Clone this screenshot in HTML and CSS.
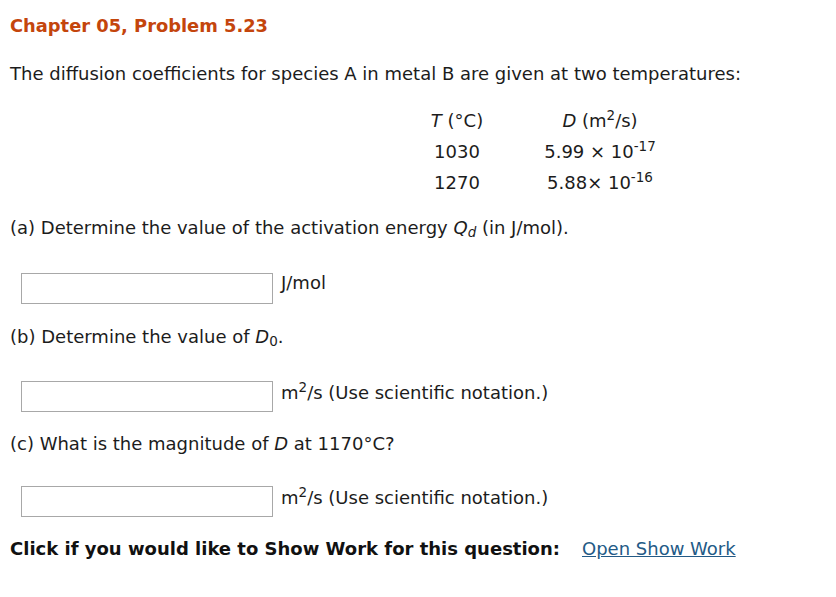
FILE: index.html
```html
<!DOCTYPE html>
<html>
<head>
<meta charset="utf-8">
<link rel="stylesheet" href="styles.css">
</head>
<body>
<div class="page">
  <h1 class="title">Chapter 05, Problem 5.23</h1>
  <p class="intro">The diffusion coefficients for species A in metal B are given at two temperatures:</p>
  <table class="data">
    <tr><td class="c1"><i>T</i> (°C)</td><td class="c2"><i>D</i> (m<sup>2</sup>/s)</td></tr>
    <tr><td class="c1">1030</td><td class="c2">5.99 × 10<sup>-17</sup></td></tr>
    <tr><td class="c1">1270</td><td class="c2">5.88× 10<sup>-16</sup></td></tr>
  </table>
  <p class="q qa">(a) Determine the value of the activation energy <i>Q<sub>d</sub></i> (in J/mol).</p>
  <div class="answer a1"><span class="box"></span><span class="unit">J/mol</span></div>
  <p class="q qb">(b) Determine the value of <i>D</i><sub>0</sub>.</p>
  <div class="answer a2"><span class="box"></span><span class="unit unit-sup">m<sup>2</sup>/s (Use scientific notation.)</span></div>
  <p class="q qc">(c) What is the magnitude of <i>D</i> at 1170°C?</p>
  <div class="answer a3"><span class="box"></span><span class="unit unit-sup">m<sup>2</sup>/s (Use scientific notation.)</span></div>
  <div class="showwork"><b>Click if you would like to Show Work for this question:</b><a class="link" href="#">Open Show Work</a></div>
</div>
</body>
</html>
```

FILE: styles.css
```css
html, body {
  margin: 0;
  padding: 0;
  background: #ffffff;
}
.page {
  padding: 15px 0 0 10px;
  font-family: "DejaVu Sans", Verdana, sans-serif;
  font-size: 18px;
  line-height: 21px;
  color: #1c1c1c;
}
.title {
  margin: 0;
  font-size: 17.85px;
  line-height: 21px;
  font-weight: bold;
  color: #c4450c;
}
.intro {
  margin: 27px 0 0 0;
}
sup, sub {
  line-height: 0;
  font-size: 75%;
}
sup { vertical-align: 0.55em; }
sub { vertical-align: -0.25em; }
.data {
  border-collapse: collapse;
  margin: 21px 0 0 402px;
}
.data td {
  padding: 0;
  height: 31px;
  text-align: center;
  vertical-align: middle;
}
.data .c1 { width: 90px; }
.data .c2 { width: 196px; }
.q {
  margin: 0;
}
.qa { margin-top: 19px; }
.qb { margin-top: 22px; }
.qc { margin-top: 21px; }
.answer {
  display: flex;
  align-items: flex-start;
  margin-left: 11px;
}
.a1 { margin-top: 35px; }
.a2 { margin-top: 34px; }
.a3 { margin-top: 32px; }
.box {
  display: block;
  width: 250px;
  height: 29px;
  border: 1px solid #a8a8a8;
  background: #fff;
}
.unit {
  margin-left: 8px;
  line-height: 19px;
}
.unit-sup {
  padding-top: 2px;
}
.showwork {
  margin-top: 21px;
  display: flex;
  align-items: baseline;
}
.showwork b {
  font-weight: bold;
  color: #111;
}
.link {
  margin-left: 22px;
  color: #235a86;
  text-decoration: underline;
}
```
